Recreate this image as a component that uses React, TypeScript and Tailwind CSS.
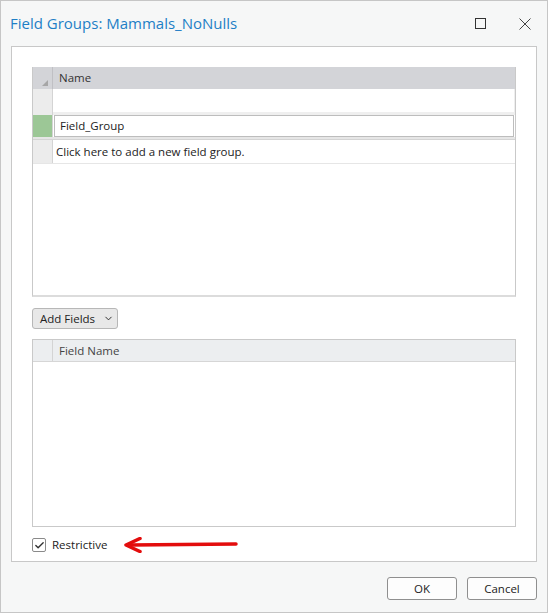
import { Check, ChevronDown } from 'lucide-react';

const font = { fontFamily: '"Segoe UI", "Open Sans", "Noto Sans", sans-serif' };

function Selector({ green }: { green?: boolean }) {
  return (
    <div
      className={`w-[20px] shrink-0 border-r border-[#d4d4d4] ${green ? 'bg-[#9cc796]' : 'bg-[#ececec]'}`}
    />
  );
}

export default function App() {
  return (
    <div
      className="flex h-[613px] w-[548px] flex-col border border-[#c6c6c6] bg-[#f6f7f7] text-[11.5px] text-[#222]"
      style={font}
    >
      <div className="flex h-[45px] shrink-0 items-center pl-[9px] pr-[16px]">
        <span className="flex-1 text-[15px] text-[#1e7fc6]">Field Groups: Mammals_NoNulls</span>
        <svg width="11" height="11" viewBox="0 0 11 11" className="mr-[33px]">
          <rect x="0.5" y="0.5" width="10" height="10" fill="none" stroke="#333" strokeWidth="1" />
        </svg>
        <svg width="12" height="12" viewBox="0 0 12 12">
          <path d="M0.5 0.5 L11.5 11.5 M11.5 0.5 L0.5 11.5" stroke="#444" strokeWidth="1" />
        </svg>
      </div>

      <div className="mx-[10px] flex h-[516px] shrink-0 flex-col border border-[#c8c8c8] bg-white px-[20px] pt-[20px]">
        <div className="flex h-[230px] flex-col border-r border-b-2 border-l border-[#c9c9c9] border-b-[#dcdcdc]">
          <div className="flex h-[22px] shrink-0 bg-[#d3d4d8]">
            <div className="relative w-[20px] shrink-0 border-r border-[#c0c0c4]">
              <span className="absolute bottom-[3px] right-[4px] h-0 w-0 border-b-[6px] border-l-[6px] border-b-[#a6a6a6] border-l-transparent" />
            </div>
            <div className="flex items-center pl-[6px] text-[#333]">Name</div>
          </div>
          <div className="flex h-[23px] shrink-0">
            <Selector />
            <div className="flex-1 border-r border-[#eee] bg-white" />
          </div>
          <div className="flex h-[3px] shrink-0 bg-[#efefef]">
            <Selector />
          </div>
          <div className="flex h-[22px] shrink-0">
            <Selector green />
            <div className="flex flex-1 px-[1px]">
              <div className="flex flex-1 items-center border border-[#bdbdbd] pl-[5px]">Field_Group</div>
            </div>
          </div>
          <div className="flex h-[3px] shrink-0 border-b border-[#d4d4d4] bg-[#e6e6e6]" />
          <div className="flex h-[24px] shrink-0 border-b border-[#e6e6e6]">
            <Selector />
            <div className="flex items-center pl-[3px]">Click here to add a new field group.</div>
          </div>
        </div>

        <div className="mt-[11px] flex">
          <div className="flex h-[21px] w-[86px] items-center gap-[8px] whitespace-nowrap rounded-[3px] border border-[#b7b7b7] bg-[#e8e8e8] pl-[7px] text-[#222]">
            <span>Add Fields</span>
            <ChevronDown className="h-[11px] w-[11px] shrink-0" strokeWidth={2} />
          </div>
        </div>

        <div className="mt-[10px] flex h-[188px] flex-col border border-[#c9c9c9]">
          <div className="flex h-[22px] shrink-0 border-b border-[#d6d6d6] bg-[#eceef0]">
            <div className="w-[20px] shrink-0 border-r border-[#d4d4d4]" />
            <div className="flex items-center pl-[6px] text-[#444]">Field Name</div>
          </div>
        </div>

        <div className="mt-[11px] flex h-[14px] items-center">
          <div className="flex h-[14px] w-[14px] items-center justify-center rounded-[2px] border border-[#8a8a8a] bg-white">
            <Check className="h-[11px] w-[11px] text-[#333]" strokeWidth={3} />
          </div>
          <span className="ml-[6px]">Restrictive</span>
          <svg width="116" height="16" viewBox="0 0 116 16" className="ml-[16px]">
            <path d="M113 7 L8 8" stroke="#e30d0d" strokeWidth="3.5" strokeLinecap="round" />
            <path d="M17 1.5 L3 8 L17 14.5" fill="none" stroke="#e30d0d" strokeWidth="3.5" strokeLinecap="round" strokeLinejoin="round" />
          </svg>
        </div>
      </div>

      <div className="flex flex-1 items-start justify-end gap-[10px] pt-[15px] pr-[10px]">
        <div className="flex h-[23px] w-[70px] items-center justify-center rounded-[3px] border border-[#8f8f8f] bg-[#fdfdfd]">OK</div>
        <div className="flex h-[23px] w-[70px] items-center justify-center rounded-[3px] border border-[#8f8f8f] bg-[#fdfdfd]">Cancel</div>
      </div>
    </div>
  );
}
